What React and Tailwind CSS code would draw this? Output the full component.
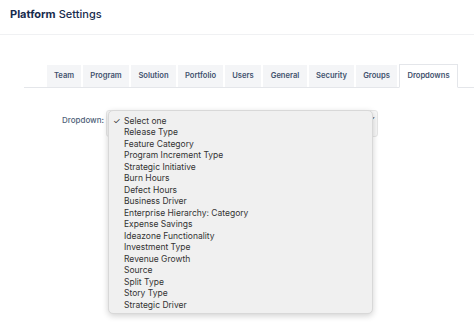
import React from "react";

const tabs = [
  ["Team", "w-[34px]"],
  ["Program", "w-[46px]"],
  ["Solution", "w-[45px]"],
  ["Portfolio", "w-[45px]"],
  ["Users", "w-[36px]"],
  ["General", "w-[44px]"],
  ["Security", "w-[45px]"],
  ["Groups", "w-[41px]"],
];

const items = [
  "Select one",
  "Release Type",
  "Feature Category",
  "Program Increment Type",
  "Strategic Initiative",
  "Burn Hours",
  "Defect Hours",
  "Business Driver",
  "Enterprise Hierarchy: Category",
  "Expense Savings",
  "Ideazone Functionality",
  "Investment Type",
  "Revenue Growth",
  "Source",
  "Split Type",
  "Story Type",
  "Strategic Driver",
];

export default function App() {
  return (
    <div
      className="w-[474px] h-[323px] bg-white overflow-hidden relative"
      style={{ fontFamily: "Inter, 'Liberation Sans', sans-serif" }}
    >
      <div className="h-[35px] border-b border-[#f0f1f3] flex items-center pl-[10px] pb-[5px]">
        <span className="text-[11px] text-[#172b4d] leading-none">
          <span className="font-bold">Platform</span> <span className="font-medium">Settings</span>
        </span>
      </div>

      <div className="mt-[30px] ml-[24px] border-b border-[#e4e6ea] flex items-end h-[23px] pl-[23px] gap-[2px]">
        {tabs.map(([t, w]) => (
          <div
            key={t}
            className={`${w} h-[22px] bg-[#f4f5f7] flex items-center justify-center text-[7.6px] font-semibold text-[#42526e]`}
          >
            {t}
          </div>
        ))}
        <div className="w-[59px] h-[24px] -mb-[1px] bg-white border border-[#e4e6ea] border-b-white flex items-center justify-center text-[7.6px] font-semibold text-[#42526e]">
          Dropdowns
        </div>
      </div>

      <div className="flex items-start mt-[22px]">
        <div className="w-[105px] pr-[1px] text-right text-[8px] font-medium text-[#505f79] pt-[4px]">
          Dropdown:
        </div>
        <div className="relative w-[272px] h-[27px] ml-[1px] rounded-[3px] border border-[#e6e6e6] bg-[#f7f7f7]">
          <span className="absolute right-[2px] top-[4px] text-[8px] leading-none text-[#222]">✓</span>
        </div>
      </div>

      <div className="absolute left-[108px] top-[110px] w-[265px] h-[204px] rounded-[5px] bg-[#f0f0f0] border border-[#d8d8d8] shadow-[0_2px_6px_rgba(0,0,0,0.18)] pt-[4px]">
        {items.map((it, i) => (
          <div key={it} className="relative h-[11.5px] flex items-center pl-[15px] text-[8.5px] text-[#333333] leading-none">
            {i === 0 && <span className="absolute left-[4px] text-[8.5px] text-[#333]">✓</span>}
            {it}
          </div>
        ))}
      </div>
    </div>
  );
}
